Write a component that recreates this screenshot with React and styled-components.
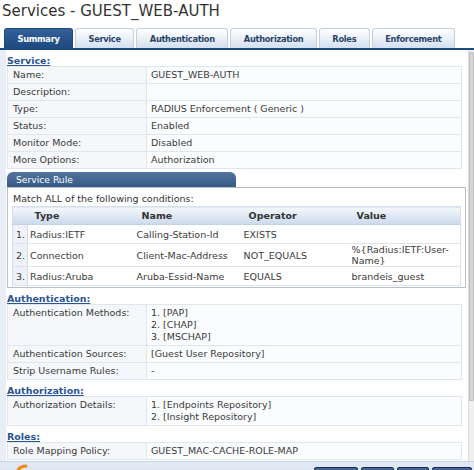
import React from 'react';
import styled, { createGlobalStyle } from 'styled-components';

const Global = createGlobalStyle`
  html, body { margin: 0; padding: 0; background: #fff; }
  body { font-family: "DejaVu Sans", Verdana, sans-serif; }
`;

const Page = styled.div`
  width: 474px;
  height: 470px;
  overflow: hidden;
  display: flex;
  flex-direction: column;
  background: #fff;
  color: #333;
  font-family: "DejaVu Sans", Verdana, sans-serif;
  font-size: 9.5px;
`;

const Title = styled.h1`
  margin: 0;
  padding: 1px 0 0 2px;
  font-size: 15px;
  line-height: 20px;
  font-weight: normal;
  color: #333;
`;

const TabBar = styled.div`
  display: flex;
  gap: 2px;
  margin-top: 7px;
  padding-left: 4px;
  border-bottom: 2px solid #1f4a80;
  flex-shrink: 0;
`;

const Tab = styled.div`
  box-sizing: border-box;
  height: 20px;
  padding: 0 12.5px;
  border: 1px solid ${p => (p.$active ? '#1f4a80' : '#c3cfdf')};
  border-bottom: none;
  border-radius: 3px 3px 0 0;
  background: ${p =>
    p.$active
      ? 'linear-gradient(#33609a, #1f4a80)'
      : 'linear-gradient(#ffffff, #d3e0f0)'};
  color: ${p => (p.$active ? '#ffffff' : '#2a4467')};
  font-family: "DejaVu Sans Condensed", "DejaVu Sans", sans-serif;
  font-weight: bold;
  font-size: 9.2px;
  letter-spacing: -0.3px;
  line-height: 19px;
  white-space: nowrap;
`;

const Body = styled.div`
  display: flex;
  height: 411px;
  flex-shrink: 0;
`;

const Main = styled.div`
  flex: 1;
  min-width: 0;
  border-left: 6px solid #e9edf6;
  padding: 5px 2px 0 1px;
  overflow: hidden;
`;

const ScrollTrack = styled.div`
  width: 6px;
  background: #efefef;
  border-left: 1px solid #dedede;
  padding-top: 2px;
  box-sizing: border-box;
`;

const ScrollThumb = styled.div`
  height: 349px;
  background: #d6d6d6;
  border: 1px solid #bdbdbd;
  border-radius: 1px;
  box-sizing: border-box;
`;

const Heading = styled.div`
  margin-top: ${p => (p.$first ? '0' : '5px')};
  font-weight: bold;
  text-decoration: underline;
  color: #2a5494;
  line-height: 11px;
`;

const InfoTable = styled.table`
  width: calc(100% - 4px);
  border-collapse: collapse;
  line-height: 12px;
  color: #3a3a3a;
`;

const LabelCell = styled.td`
  width: 129px;
  padding: 2px 4px 2px 5px;
  background: #f5f7fa;
  border: 1px solid #e0e6ee;
  vertical-align: top;
`;

const ValueCell = styled.td`
  padding: 2px 4px;
  background: #fbfcfe;
  border: 1px solid #e0e6ee;
  vertical-align: top;
`;

const RuleTab = styled.div`
  margin-top: 3px;
  width: 229px;
  height: 15px;
  box-sizing: border-box;
  padding-left: 9px;
  line-height: 15px;
  font-size: 9.2px;
  color: #fff;
  background: linear-gradient(#52739c, #365b87);
  border-radius: 6px 6px 0 0;
`;

const RuleBox = styled.div`
  border: 1px solid #b7bfcb;
  padding: 5px 4px 1px 4px;
  background: #fff;
`;

const MatchText = styled.div`
  line-height: 12px;
  padding-left: 1px;
  color: #333;
`;

const RuleTable = styled.table`
  margin-top: 1px;
  width: 100%;
  border-collapse: collapse;
  border: 1px solid #d9dfe8;
  color: #3a3a3a;
`;

const Th = styled.th`
  height: 17px;
  padding: 0 7px;
  text-align: left;
  font-weight: bold;
  color: #333;
  background: linear-gradient(#f4f8fc, #cbd9ec);
  border-bottom: 1px solid #c5d2e3;
`;

const Td = styled.td`
  height: 18px;
  padding: 0 2px;
  line-height: 11px;
  border-bottom: 1px solid #dfe4eb;
  vertical-align: middle;
`;

const IndexTd = styled(Td)`
  padding: 0 2px 0 3px;
  background: #eef2f8;
  border-right: 1px solid #d5dce6;
`;

const Footer = styled.div`
  flex: 1;
  display: flex;
  justify-content: space-between;
  align-items: flex-start;
  padding: 4px 2px 0 12px;
  background: linear-gradient(#e3eaf5, #d3deed);
  border-top: 1px solid #c9d4e4;
`;

const BackLink = styled.div`
  display: flex;
  align-items: flex-start;
  gap: 2px;
  font-weight: bold;
  font-size: 10px;
  line-height: 16px;
  color: #1f3c66;
  margin-top: -2px;
`;

const BackText = styled.span`
  padding-top: 3px;
`;

const Buttons = styled.div`
  display: flex;
  gap: 3px;
  margin-top: 1px;
`;

const Button = styled.div`
  height: 18px;
  box-sizing: border-box;
  padding: 0 4px;
  background: linear-gradient(#45679a, #1c3a66);
  border: 1px solid #16305a;
  border-radius: 2px;
  color: #fff;
  font-family: "DejaVu Sans Condensed", "DejaVu Sans", sans-serif;
  font-weight: bold;
  font-size: 9px;
  line-height: 16px;
`;

const tabs = ['Summary', 'Service', 'Authentication', 'Authorization', 'Roles', 'Enforcement'];

const serviceRows = [
  ['Name:', 'GUEST_WEB-AUTH'],
  ['Description:', ''],
  ['Type:', 'RADIUS Enforcement ( Generic )'],
  ['Status:', 'Enabled'],
  ['Monitor Mode:', 'Disabled'],
  ['More Options:', 'Authorization'],
];

const rules = [
  ['1.', 'Radius:IETF', 'Calling-Station-Id', 'EXISTS', ['']],
  ['2.', 'Connection', 'Client-Mac-Address', 'NOT_EQUALS', ['%{Radius:IETF:User-', 'Name}']],
  ['3.', 'Radius:Aruba', 'Aruba-Essid-Name', 'EQUALS', ['brandeis_guest']],
];

const Lines = ({ items }) =>
  items.map((t, i) => (
    <React.Fragment key={i}>
      {i > 0 && <br />}
      {t}
    </React.Fragment>
  ));

const KV = ({ rows }) => (
  <InfoTable>
    <tbody>
      {rows.map(([k, v]) => (
        <tr key={k}>
          <LabelCell>{k}</LabelCell>
          <ValueCell>{Array.isArray(v) ? <Lines items={v} /> : v || '\u00a0'}</ValueCell>
        </tr>
      ))}
    </tbody>
  </InfoTable>
);

const BackArrow = () => (
  <svg width="16" height="16" viewBox="0 0 16 16">
    <path d="M14 2 C9 2 6 4 5 9" stroke="#f08a1c" strokeWidth="3" fill="none" strokeLinecap="round" />
    <path d="M1 7 L5 13 L9 8 Z" fill="#f08a1c" />
  </svg>
);

export default function App() {
  return (
    <Page>
      <Global />
      <Title>Services - GUEST_WEB-AUTH</Title>
      <TabBar>
        {tabs.map(t => (
          <Tab key={t} $active={t === 'Summary'}>{t}</Tab>
        ))}
      </TabBar>
      <Body>
        <Main>
          <Heading $first>Service:</Heading>
          <KV rows={serviceRows} />
          <RuleTab>Service Rule</RuleTab>
          <RuleBox>
            <MatchText>Match ALL of the following conditions:</MatchText>
            <RuleTable>
              <colgroup>
                <col style={{ width: '14px' }} />
                <col style={{ width: '107px' }} />
                <col style={{ width: '107px' }} />
                <col style={{ width: '108px' }} />
                <col />
              </colgroup>
              <thead>
                <tr>
                  <Th />
                  <Th>Type</Th>
                  <Th>Name</Th>
                  <Th>Operator</Th>
                  <Th>Value</Th>
                </tr>
              </thead>
              <tbody>
                {rules.map(([n, type, name, op, val]) => (
                  <tr key={n}>
                    <IndexTd>{n}</IndexTd>
                    <Td>{type}</Td>
                    <Td>{name}</Td>
                    <Td>{op}</Td>
                    <Td><Lines items={val} /></Td>
                  </tr>
                ))}
              </tbody>
            </RuleTable>
          </RuleBox>
          <Heading>Authentication:</Heading>
          <KV
            rows={[
              ['Authentication Methods:', ['1. [PAP]', '2. [CHAP]', '3. [MSCHAP]']],
              ['Authentication Sources:', '[Guest User Repository]'],
              ['Strip Username Rules:', '-'],
            ]}
          />
          <Heading>Authorization:</Heading>
          <KV
            rows={[
              ['Authorization Details:', ['1. [Endpoints Repository]', '2. [Insight Repository]']],
            ]}
          />
          <Heading>Roles:</Heading>
          <KV rows={[['Role Mapping Policy:', 'GUEST_MAC-CACHE-ROLE-MAP']]} />
        </Main>
        <ScrollTrack>
          <ScrollThumb />
        </ScrollTrack>
      </Body>
      <Footer>
        <BackLink>
          <BackArrow />
          <BackText>Back to Services</BackText>
        </BackLink>
        <Buttons>
          <Button>Disable</Button>
          <Button>Copy</Button>
          <Button>Save</Button>
          <Button>Cancel</Button>
        </Buttons>
      </Footer>
    </Page>
  );
}
